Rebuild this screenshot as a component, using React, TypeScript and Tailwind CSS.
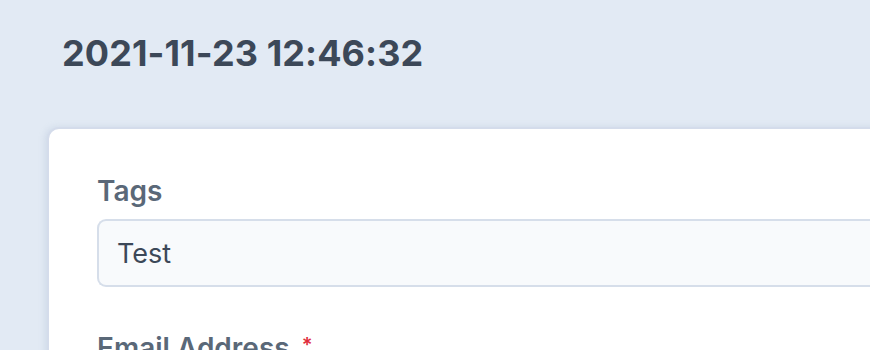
export default function App() {
  return (
    <div
      className="h-[350px] w-[870px] overflow-hidden bg-[#e2eaf4] pl-[47px] pt-[30px]"
      style={{ fontFamily: "Inter, 'Noto Sans', sans-serif" }}
    >
      {/* Page title */}
      <h1 className="pl-[15px] text-[36px] font-bold leading-[46px] tracking-[0.1px] text-[#3c4858]">
        2021-11-23 12:46:32
      </h1>

      {/* Form card */}
      <div className="mt-[51px] h-[400px] w-[900px] rounded-tl-[12px] border-2 border-[#d4dceb] bg-white pl-[48px] pt-[44px] shadow-[-2px_0_6px_rgba(150,170,200,0.25)]">
        <label className="block text-[28px] font-semibold leading-[36px] text-[#5a6878]">
          Tags
        </label>
        <div className="mt-[10px] flex h-[68px] items-center rounded-l-[9px] border-2 border-r-0 border-[#d6deea] bg-[#f8fafc] pl-[18px] pt-[3px] text-[27px] text-[#3c4858]">
          Test
        </div>

        <label className="mt-[43px] flex items-start text-[28px] font-semibold leading-[36px] text-[#5a6878]">
          Email Address
          <span className="ml-[12px] mt-[5px] text-[20px] leading-[20px] text-[#e02d3c]">*</span>
        </label>
      </div>
    </div>
  );
}
